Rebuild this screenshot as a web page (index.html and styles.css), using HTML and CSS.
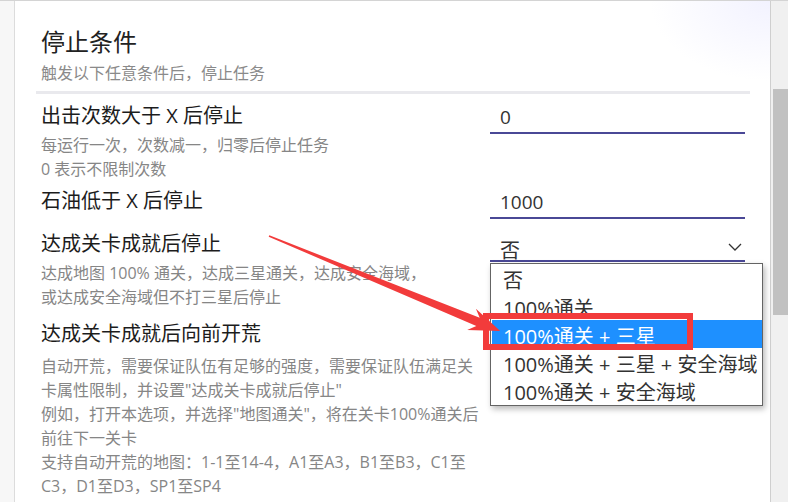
FILE: index.html
```html
<!DOCTYPE html>
<html lang="zh-CN">
<head>
<meta charset="utf-8">
<title>停止条件</title>
<link rel="stylesheet" href="styles.css">
</head>
<body>
<div class="app">
  <div class="side"></div>
  <main class="panel">
    <section class="group">
      <h1 class="heading">停止条件</h1>
      <p class="sub">触发以下任意条件后，停止任务</p>
      <div class="divider"></div>

      <div class="row">
        <div class="info">
          <div class="title">出击次数大于 X 后停止</div>
          <div class="desc">每运行一次，次数减一，归零后停止任务<br>0 表示不限制次数</div>
        </div>
        <div class="field"><span class="value">0</span></div>
      </div>

      <div class="row">
        <div class="info">
          <div class="title">石油低于 X 后停止</div>
        </div>
        <div class="field"><span class="value">1000</span></div>
      </div>

      <div class="row">
        <div class="info">
          <div class="title">达成关卡成就后停止</div>
          <div class="desc">达成地图 100% 通关，达成三星通关，达成安全海域，<br>或达成安全海域但不打三星后停止</div>
        </div>
        <div class="field select">
          <span class="value">否</span>
          <svg class="chevron" width="14" height="8" viewBox="0 0 14 8"><polyline points="1,1 7,7 13,1" fill="none" stroke="#333" stroke-width="1.3"/></svg>
        </div>
      </div>

      <div class="row row-last">
        <div class="info">
          <div class="title">达成关卡成就后向前开荒</div>
          <div class="desc">自动开荒，需要保证队伍有足够的强度，需要保证队伍满足关<br>卡属性限制，并设置"达成关卡成就后停止"<br>例如，打开本选项，并选择"地图通关"，将在关卡100%通关后<br>前往下一关卡<br>支持自动开荒的地图：1-1至14-4，A1至A3，B1至B3，C1至<br>C3，D1至D3，SP1至SP4</div>
        </div>
      </div>
    </section>
  </main>
  <div class="scrollbar"><div class="thumb"></div></div>
</div>

<ul class="dropdown">
  <li>否</li>
  <li>100%通关</li>
  <li class="active">100%通关 + 三星</li>
  <li>100%通关 + 三星 + 安全海域</li>
  <li>100%通关 + 安全海域</li>
</ul>

<svg class="annot" width="788" height="502" viewBox="0 0 788 502">
  <g transform="translate(269 236) rotate(22.35)">
    <polygon points="0,-0.8 226,-4.4 219,-11.5 250,0 219,11.5 226,4.4 0,0.8" fill="#f23b3b"/>
  </g>
  <rect x="486" y="316" width="204" height="31" fill="none" stroke="#f23b3b" stroke-width="6"/>
</svg>
</body>
</html>
```

FILE: styles.css
```css
* { box-sizing: border-box; }

html, body {
  margin: 0;
  padding: 0;
  width: 788px;
  height: 502px;
  overflow: hidden;
  background: #ffffff;
  font-family: "Open Sans", "Noto Sans CJK SC", sans-serif;
}

.app {
  display: flex;
  height: 502px;
  border-top: 1px solid #d4d4d4;
}

.side {
  width: 15px;
  flex: none;
  background: #f7f7f7;
  border-right: 1px solid #dcdcdc;
}

.panel {
  width: 756px;
  flex: none;
  border-right: 1px solid #cfcfcf;
  background:
    radial-gradient(ellipse 120px 80px at 100% 0, rgba(232, 232, 255, 0.55), rgba(255, 255, 255, 0) 100%),
    #ffffff;
}

.group {
  margin-left: 21px;
  width: 714px;
}

.heading {
  margin: 25px 0 0;
  padding-left: 5px;
  font-size: 24px;
  line-height: 32px;
  font-weight: normal;
  color: #222;
}

.sub {
  margin: 3px 0 0;
  padding-left: 5px;
  font-size: 16px;
  line-height: 24px;
  color: #8a8a8a;
}

.divider {
  margin-top: 6px;
  height: 3px;
  background: #e9e9ed;
}

.row {
  display: flex;
  justify-content: space-between;
  align-items: flex-start;
  padding: 0 5px;
  margin-top: 8px;
}

.row + .row { margin-top: 6px; }
.row-last { margin-top: 11px !important; }

.info {
  width: 440px;
}

.title {
  font-size: 20px;
  line-height: 28px;
  color: #1c1c1c;
  white-space: nowrap;
}

.desc {
  margin-top: 3px;
  font-size: 16px;
  line-height: 24px;
  color: #868686;
  white-space: nowrap;
}

.row-last .desc { margin-top: 6px; }

.field {
  width: 255px;
  height: 32px;
  margin-bottom: 5px;
  padding-left: 10px;
  border-bottom: 2px solid #4a4896;
  display: flex;
  align-items: center;
  font-size: 19px;
  color: #333;
}

.select {
  justify-content: space-between;
  padding-right: 3px;
  padding-top: 8px;
}

.select .value { font-size: 20px; }

.chevron { display: block; margin-top: -4px; }

.scrollbar {
  flex: 1;
  background: #f0f0f0;
  padding: 88px 0 0 2px;
}

.thumb {
  height: 226px;
  background: #c1c1c1;
}

.dropdown {
  position: absolute;
  left: 490px;
  top: 263px;
  width: 273px;
  height: 143px;
  margin: 0;
  padding: 0 0 0 1px;
  list-style: none;
  background: #fff;
  border: 1px solid #646464;
  box-shadow: 2px 3px 6px rgba(0, 0, 0, 0.28);
  overflow: hidden;
}

.dropdown li {
  height: 28px;
  padding: 5px 0 0 11px;
  line-height: 23px;
  font-size: 20px;
  color: #333;
  white-space: nowrap;
}

.dropdown li.active {
  background: #1e90ff;
  color: #fff;
}

.annot {
  position: absolute;
  left: 0;
  top: 0;
  pointer-events: none;
}
```
